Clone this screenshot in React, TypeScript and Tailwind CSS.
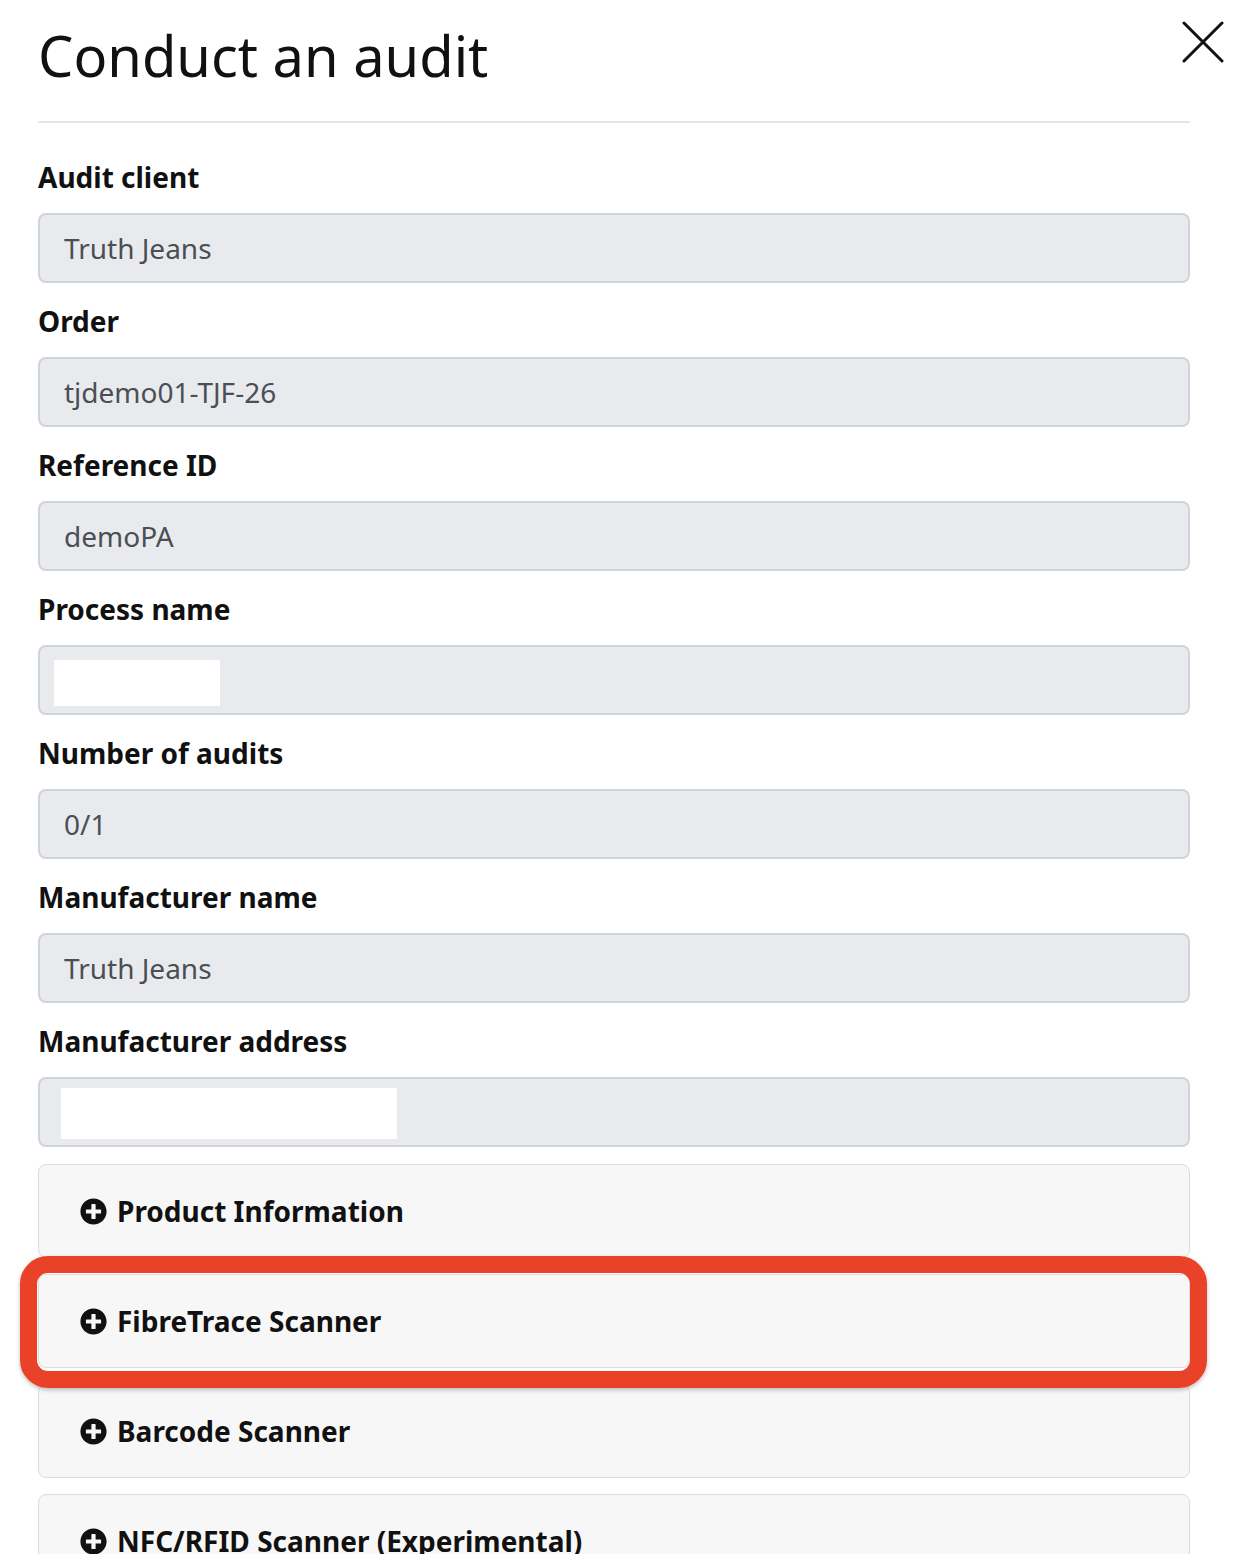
import { FaPlusCircle } from "react-icons/fa";

const fields = [
  { label: "Audit client", value: "Truth Jeans" },
  { label: "Order", value: "tjdemo01-TJF-26" },
  { label: "Reference ID", value: "demoPA" },
  { label: "Process name", redact: "w-[166px] h-[46px] ml-[-10px] mt-[6px]" },
  { label: "Number of audits", value: "0/1" },
  { label: "Manufacturer name", value: "Truth Jeans" },
  { label: "Manufacturer address", redact: "w-[336px] h-[51px] ml-[-3px] mt-[2px]" },
];

const sections = [
  "Product Information",
  "FibreTrace Scanner",
  "Barcode Scanner",
  "NFC/RFID Scanner (Experimental)",
];

function Field({ label, value, redact }: { label: string; value?: string; redact?: string }) {
  return (
    <div className="mb-[20px]">
      <label className="block text-[28px] leading-[36px] font-bold text-[#111] mb-[18px]">
        {label}
      </label>
      <div className="h-[70px] flex items-center rounded-[8px] border-2 border-[#ced4da] bg-[#e9eaee] px-[24px] text-[28px] text-[#4a4f55]">
        {redact ? <div className={`bg-white ${redact}`} /> : value}
      </div>
    </div>
  );
}

function Section({ title, highlighted }: { title: string; highlighted?: boolean }) {
  return (
    <div className="relative mb-[16px]">
      {highlighted && (
        <div className="absolute -left-[18px] -right-[17px] -top-[18px] -bottom-[20px] rounded-[28px] border-[17px] border-[#ea4229] shadow-[0_2px_4px_rgba(0,0,0,0.25)] z-10" />
      )}
      <div className="h-[94px] flex items-center gap-[10px] rounded-[8px] border border-[#dcdcdc] bg-[#f7f7f7] pl-[41px] text-[28px] font-bold text-[#111]">
        <FaPlusCircle className="w-[27px] h-[27px]" />
        <span>{title}</span>
      </div>
    </div>
  );
}

export default function App() {
  return (
    <div
      className="bg-white h-[1554px] overflow-hidden pl-[38px]"
      style={{ fontFamily: '"Noto Sans", "Open Sans", sans-serif' }}
    >
      <div className="w-[1186px] h-[121px] flex justify-between items-start">
        <h1 className="text-[56px] leading-[72px] pt-[19px] text-[#111]">Conduct an audit</h1>
        <button className="mt-[21px]" aria-label="Close">
          <svg width="42" height="42" viewBox="0 0 42 42" fill="none">
            <path d="M2 2L40 40M40 2L2 40" stroke="#111" strokeWidth="3" strokeLinecap="round" />
          </svg>
        </button>
      </div>
      <div className="w-[1152px] h-[2px] bg-[#e6e6e6]" />
      <div className="w-[1152px] pt-[36px]">
        {fields.map((f) => (
          <Field key={f.label} {...f} />
        ))}
        <div className="-mt-[3px]">
          {sections.map((s) => (
            <Section key={s} title={s} highlighted={s === "FibreTrace Scanner"} />
          ))}
        </div>
      </div>
    </div>
  );
}
